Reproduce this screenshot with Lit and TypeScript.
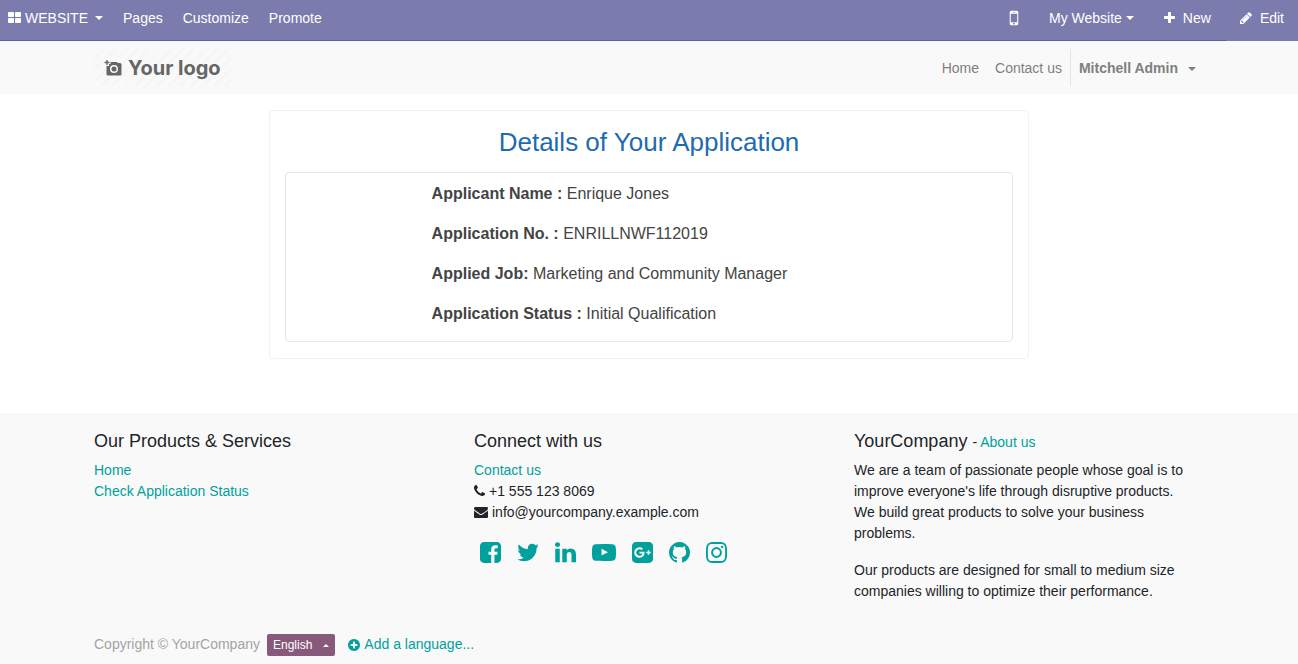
import { LitElement, html, css, svg } from "lit";
import { customElement } from "lit/decorators.js";

interface Glyph {
  x: number;
  w: number;
  d: string;
}

const glyphs: Record<string, Glyph> = {
  grid: { x: 64, w: 1664, d: "M832 1024v384q0 52-38 90t-90 38h-512q-52 0-90-38t-38-90v-384q0-52 38-90t90-38h512q52 0 90 38t38 90zm0-768v384q0 52-38 90t-90 38h-512q-52 0-90-38t-38-90v-384q0-52 38-90t90-38h512q52 0 90 38t38 90zm896 768v384q0 52-38 90t-90 38h-512q-52 0-90-38t-38-90v-384q0-52 38-90t90-38h512q52 0 90 38t38 90zm0-768v384q0 52-38 90t-90 38h-512q-52 0-90-38t-38-90v-384q0-52 38-90t90-38h512q52 0 90 38t38 90z" },
  mobile: { x: 512, w: 768, d: "M976 1408q0-33-23.5-56.5t-56.5-23.5-56.5 23.5-23.5 56.5 23.5 56.5 56.5 23.5 56.5-23.5 23.5-56.5zm208-160v-704q0-13-9.5-22.5t-22.5-9.5h-512q-13 0-22.5 9.5t-9.5 22.5v704q0 13 9.5 22.5t22.5 9.5h512q13 0 22.5-9.5t9.5-22.5zm-192-848q0-16-16-16h-160q-16 0-16 16t16 16h160q16 0 16-16zm288-16v1024q0 52-38 90t-90 38h-512q-52 0-90-38t-38-90v-1024q0-52 38-90t90-38h512q52 0 90 38t38 90z" },
  plus: { x: 192, w: 1408, d: "M1600 736v192q0 40-28 68t-68 28h-416v416q0 40-28 68t-68 28h-192q-40 0-68-28t-28-68v-416h-416q-40 0-68-28t-28-68v-192q0-40 28-68t68-28h416v-416q0-40 28-68t68-28h192q40 0 68 28t28 68v416h416q40 0 68 28t28 68z" },
  pencil: { x: 128, w: 1536, d: "M491 1536l91-91-235-235-91 91v107h128v128h107zm523-928q0-22-22-22-10 0-17 7l-542 542q-7 7-7 17 0 22 22 22 10 0 17-7l542-542q7-7 7-17zm-54-192l416 416-832 832h-416v-416zm683 96q0 53-37 90l-166 166-416-416 166-165q36-38 90-38 53 0 91 38l235 234q37 39 37 91z" },
  phone: { x: 192, w: 1408, d: "M1600 1240q0 27-10 70.5t-21 68.5q-21 50-122 106-94 51-186 51-27 0-53-3.5t-57.5-12.5-47-14.5-55.5-20.5-49-18q-98-35-175-83-127-79-264-216t-216-264q-48-77-83-175-3-9-18-49t-20.5-55.5-14.5-47-12.5-57.5-3.5-53q0-92 51-186 56-101 106-122 25-11 68.5-21t70.5-10q14 0 21 3 18 6 53 76 11 19 30 54t35 63.5 31 53.5q3 4 17.5 25t21.5 35.5 7 28.5q0 20-28.5 50t-62 55-62 53-28.5 46q0 9 5 22.5t8.5 20.5 14 24 11.5 19q76 137 174 235t235 174q2 1 19 11.5t24 14 20.5 8.5 22.5 5q18 0 46-28.5t53-62 55-62 50-28.5q14 0 28.5 7t35.5 21.5 25 17.5q25 15 53.5 31t63.5 35 54 30q70 35 76 53 3 7 3 21z" },
  envelope: { x: 0, w: 1792, d: "M1792 710v794q0 66-47 113t-113 47h-1472q-66 0-113-47t-47-113v-794q44 49 101 87 362 246 497 345 57 42 92.5 65.5t94.5 48 110 24.5h2q51 0 110-24.5t94.5-48 92.5-65.5q170-123 498-345 57-39 100-87zm0-294q0 79-49 151t-122 123q-376 261-468 325-10 7-42.5 31t-54 38.5-52 32.5-57.5 27-50 9h-2q-23 0-50-9t-57.5-27-52-32.5-54-38.5-42.5-31q-91-64-262-182.5t-205-142.5q-62-42-117-115.5t-55-136.5q0-78 41.5-130t118.5-52h1472q65 0 112.5 47t47.5 113z" },
  facebook: { x: 128, w: 1536, d: "M1376 128q119 0 203.5 84.5t84.5 203.5v960q0 119-84.5 203.5t-203.5 84.5h-188v-595h199l30-232h-229v-148q0-56 23.5-84t91.5-28l122-1v-207q-63-9-178-9-136 0-217.5 80t-81.5 226v171h-200v232h200v595h-532q-119 0-203.5-84.5t-84.5-203.5v-960q0-119 84.5-203.5t203.5-84.5h960z" },
  twitter: { x: 88, w: 1616, d: "M1684 408q-67 98-162 167 1 14 1 42 0 130-38 259.5t-115.5 248.5-184.5 210.5-258 146-323 54.5q-271 0-496-145 35 4 78 4 225 0 401-138-105-2-188-64.5t-114-159.5q33 5 61 5 43 0 85-11-112-23-185.5-111.5t-73.5-205.5v-4q68 38 146 41-66-44-105-115t-39-154q0-88 44-163 121 149 294.5 238.5t371.5 99.5q-8-38-8-74 0-134 94.5-228.5t228.5-94.5q140 0 236 102 109-21 205-78-37 115-142 178 93-10 186-50z" },
  linkedin: { x: 128, w: 1536, d: "M477 625v991h-330v-991h330zm21-306q1 73-50.5 122t-135.5 49h-2q-82 0-132-49t-50-122q0-74 51.5-122.5t134.5-48.5 133 48.5 51 122.5zm1166 729v568h-329v-530q0-105-40.5-164.5t-126.5-59.5q-63 0-105.5 34.5t-63.5 85.5q-11 30-11 81v553h-329q2-399 2-647t-1-296l-1-48h329v144h-2q20-32 41-56t56.5-52 87-43.5 114.5-15.5q171 0 275 113.5t104 332.5z" },
  youtube: { x: 0, w: 1792, d: "M711 1128l484-250-484-253v503zm185-862q168 0 324.5 4.5t229.5 9.5l73 4q1 0 17 1.5t23 3 23.5 4.5 28.5 8 28 13 31 19.5 29 26.5q6 6 15.5 18.5t29 58.5 26.5 101q8 64 12.5 136.5t5.5 113.5v176q1 145-18 290-7 55-25 99.5t-32 61.5l-14 17q-14 15-29 26.5t-31 19-28 12.5-28.5 8-24 4.5-23 3-16.5 1.5q-251 19-627 19-207-2-359.5-6.5t-200.5-7.5l-49-4-36-4q-36-5-54.5-10t-51-21-56.5-41q-6-6-15.5-18.5t-29-58.5-26.5-101q-8-64-12.5-136.5t-5.5-113.5v-176q-1-145 18-290 7-55 25-99.5t32-61.5l14-17q14-15 29-26.5t31-19.5 28-13 28.5-8 23.5-4.5 23-3 17-1.5q251-18 627-18z" },
  google: { x: 128, w: 1536, d: "M1045 905q0-26-6-64h-362v132h217q-3 24-16.5 50t-37.5 53-66.5 44.5-96.5 17.5q-99 0-169-71t-70-171 70-171 169-71q92 0 153 59l104-101q-108-100-257-100-160 0-272 112.5t-112 271.5 112 271.5 272 112.5q165 0 266.5-105t101.5-270zm345 46h109v-110h-109v-110h-110v110h-110v110h110v110h110v-110zm274-535v960q0 119-84.5 203.5t-203.5 84.5h-960q-119 0-203.5-84.5t-84.5-203.5v-960q0-119 84.5-203.5t203.5-84.5h960q119 0 203.5 84.5t84.5 203.5z" },
  github: { x: 128, w: 1536, d: "M896 128q209 0 385.5 103t279.5 279.5 103 385.5q0 251-146.5 451.5t-378.5 277.5q-27 5-40-7t-13-30q0-3 .5-76.5t.5-134.5q0-97-52-142 57-6 102.5-18t94-39 81-66.5 53-105 20.5-150.5q0-119-79-206 37-91-8-204-28-9-81 11t-92 44l-38 24q-93-26-192-26t-192 26q-16-11-42.5-27t-83.5-38.5-85-13.5q-45 113-8 204-79 87-79 206 0 85 20.5 150t52.5 105 80.5 67 94 39 102.5 18q-39 36-49 103-21 10-45 15t-57 5-65.5-21.5-55.5-62.5q-19-32-48.5-52t-49.5-24l-20-3q-21 0-29 4.5t-5 11.5 9 14 13 12l7 5q22 10 43.5 38t31.5 51l10 23q13 38 44 61.5t67 30 69.5 7 55.5-3.5l23-4q0 38 .5 88.5t.5 54.5q0 18-13 30t-40 7q-232-77-378.5-277.5t-146.5-451.5q0-209 103-385.5t279.5-279.5 385.5-103z" },
  instagram: { x: 128, w: 1536, d: "M1152 896q0-106-75-181t-181-75-181 75-75 181 75 181 181 75 181-75 75-181zm138 0q0 164-115 279t-279 115-279-115-115-279 115-279 279-115 279 115 115 279zm108-410q0 38-27 65t-65 27-65-27-27-65 27-65 65-27 65 27 27 65zm-502-220q-7 0-76.5-.5t-105.5 0-96.5 3-103 10-71.5 18.5q-50 20-88 58t-58 88q-11 29-18.5 71.5t-10 103-3 96.5 0 105.5.5 76.5-.5 76.5 0 105.5 3 96.5 10 103 18.5 71.5q20 50 58 88t88 58q29 11 71.5 18.5t103 10 96.5 3 105.5 0 76.5-.5 76.5.5 105.5 0 96.5-3 103-10 71.5-18.5q50-20 88-58t58-88q11-29 18.5-71.5t10-103 3-96.5 0-105.5-.5-76.5.5-76.5 0-105.5-3-96.5-10-103-18.5-71.5q-20-50-58-88t-88-58q-29-11-71.5-18.5t-103-10-96.5-3-105.5 0-76.5.5zm768 630q0 229-5 317-10 208-124 322t-322 124q-88 5-317 5t-317-5q-208-10-322-124t-124-322q-5-88-5-317t5-317q10-208 124-322t322-124q88-5 317-5t317 5q208 10 322 124t124 322q5 88 5 317z" },
  plusCircle: { x: 128, w: 1536, d: "M1344 960v-128q0-26-19-45t-45-19h-256v-256q0-26-19-45t-45-19h-128q-26 0-45 19t-19 45v256h-256q-26 0-45 19t-19 45v128q0 26 19 45t45 19h256v256q0 26 19 45t45 19h128q26 0 45-19t19-45v-256h256q26 0 45-19t19-45zm320-64q0 209-103 385.5t-279.5 279.5-385.5 103-385.5-103-279.5-279.5-103-385.5 103-385.5 279.5-279.5 385.5-103 385.5 103 279.5 279.5 103 385.5z" },
};

const icon = (name: string, width: number, height = 14) => {
  const g = glyphs[name];
  return html`<svg class="icon" width=${width} height=${height} viewBox="${g.x} 0 ${g.w} 1792" aria-hidden="true">
    ${svg`<path d=${g.d}></path>`}
  </svg>`;
};

const socials: [string, string, number][] = [
  ["facebook", "Facebook", 21],
  ["twitter", "Twitter", 22],
  ["linkedin", "LinkedIn", 21],
  ["youtube", "YouTube", 24],
  ["google", "Google Plus", 21],
  ["github", "GitHub", 21],
  ["instagram", "Instagram", 21],
];

const details: [string, string][] = [
  ["Applicant Name :", "Enrique Jones"],
  ["Application No. :", "ENRILLNWF112019"],
  ["Applied Job:", "Marketing and Community Manager"],
  ["Application Status :", "Initial Qualification"],
];

@customElement("app-root")
export class AppRoot extends LitElement {
  static styles = css`
    :host {
      display: flex;
      flex-direction: column;
      min-height: 100vh;
      font: 14px/21px "Liberation Sans", Arial, sans-serif;
      color: #212529;
      background: #fff;
    }
    * { box-sizing: border-box; }
    h1, h2, p, ul { margin: 0; padding: 0; font-weight: 400; }
    ul { list-style: none; }
    a { color: #00a09d; text-decoration: none; }
    button {
      font: inherit;
      color: inherit;
      background: none;
      border: 0;
      padding: 0;
      margin: 0;
      cursor: pointer;
    }
    .icon { fill: currentColor; flex: none; display: block; }
    .caret {
      width: 0;
      height: 0;
      border: 4px solid transparent;
      border-top-color: currentColor;
      border-bottom-width: 0;
    }
    .caret.up { border: 3px solid transparent; border-bottom-color: currentColor; border-top-width: 0; }
    .container { width: 100%; max-width: 1140px; margin: 0 auto; padding: 0 15px; }

    .editor { display: flex; background: #7c7bad; color: #fff; }
    .editor a, .editor button { display: flex; align-items: center; color: #fff; height: 36px; }
    .editor-main {
      flex: 1;
      display: flex;
      justify-content: space-between;
      padding-left: 8px;
      height: 41px;
      border-bottom: 1px solid #5f5e97;
    }
    .editor-pages { display: flex; gap: 20px; }
    .editor-tools { display: flex; gap: 30px; padding-right: 15px; }
    .brand { gap: 4px; }
    .brand .caret { margin-left: 3px; }
    .site { gap: 4px; }
    .tool { gap: 8px; }
    .edit { padding: 0 14px; }

    .header { background: #f9f9f9; padding: 8px 0; }
    .header .container { display: flex; justify-content: space-between; align-items: stretch; }
    .logo {
      display: flex;
      align-items: center;
      gap: 6px;
      padding: 0 10px;
      height: 37px;
      color: #666;
      font: 700 20px/24px Inter, sans-serif;
      background: repeating-linear-gradient(135deg, #f9f9f9 0 6px, #f5f5f5 6px 8px);
    }
    .menu { display: flex; align-items: stretch; }
    .menu a, .menu button { display: flex; align-items: center; padding: 2px 8px 0; color: #7f7f7f; }
    .menu button { gap: 10px; font-weight: 700; border-left: 1px solid #e5e5e5; }

    .main { padding: 16px 0 54px; }
    .card {
      width: 100%;
      max-width: 760px;
      margin: 0 auto;
      padding: 16px 15px;
      border: 1px solid #f2f2f2;
      border-radius: 4px;
    }
    .title { font-size: 26px; line-height: 30px; color: #1f6bb0; text-align: center; margin-bottom: 15px; }
    .details {
      border: 1px solid #e6e6e6;
      border-radius: 4px;
      padding: 9px 16px 15px 20%;
      font-size: 16px;
      line-height: 24px;
      color: #444;
    }
    .details p + p { margin-top: 16px; }

    .footer { flex: 1; background: #f9f9f9; padding: 17px 0 8px; }
    .columns { display: grid; grid-template-columns: repeat(3, 1fr); gap: 30px; }
    .heading { font-size: 18px; line-height: 22px; margin-bottom: 8px; }
    .heading small { font-size: 14px; line-height: 14px; }
    .contact { display: flex; align-items: center; gap: 4px; }
    .contact .icon { margin-bottom: 2px; }
    .social { display: flex; gap: 16px; padding: 17px 6px 0; }
    .social a { display: block; }
    .about { padding-right: 10px; }
    .about p + p { margin-top: 16px; }
    .bottom { display: flex; align-items: flex-start; margin-top: 32px; }
    .copyright { color: #a4a4a4; }
    .bottom .lang {
      display: flex;
      align-items: center;
      gap: 11px;
      margin: 0 13px 0 7px;
      padding: 2px 6px;
      font-size: 12px;
      line-height: 18px;
      color: #fff;
      background: #875a7b;
      border-radius: 2px;
    }
    .add { display: flex; align-items: center; gap: 4px; }
  `;

  render() {
    return html`
      <nav class="editor" aria-label="Website editor">
        <div class="editor-main">
          <div class="editor-pages">
            <button class="brand">${icon("grid", 13)}<span>WEBSITE</span> <span class="caret"></span></button>
            <a href="#pages">Pages</a>
            <a href="#customize">Customize</a>
            <a href="#promote">Promote</a>
          </div>
          <div class="editor-tools">
            <button aria-label="Mobile preview">${icon("mobile", 10, 20)}</button>
            <button class="site">My Website<span class="caret"></span></button>
            <button class="tool">${icon("plus", 11)}New</button>
          </div>
        </div>
        <button class="tool edit">${icon("pencil", 12)}Edit</button>
      </nav>

      <header class="header">
        <div class="container">
          <a class="logo" href="#home">
            <svg width="18" height="18" viewBox="0 0 18 18" aria-hidden="true">
              <path fill="#666" fill-rule="evenodd" d="M6.500 3H13l1 1h2A1.500 1.500 0 0 1 17.500 5.500V15A1.500 1.500 0 0 1 16 16.500H4A1.500 1.500 0 0 1 2.500 15V7H5V5H6.500zM10 6a4 4 0 1 0 0 8a4 4 0 0 0 0-8zM10 7.500a2.500 2.500 0 1 1 0 5a2.500 2.500 0 0 1 0-5z"></path>
              <path stroke="#666" stroke-width="1.400" d="M3 1v5M.500 3.500h5"></path>
            </svg>
            <span>Your logo</span>
          </a>
          <nav class="menu" aria-label="Main">
            <a href="#home">Home</a>
            <a href="#contact">Contact us</a>
            <button>Mitchell Admin <span class="caret"></span></button>
          </nav>
        </div>
      </header>

      <main class="main">
        <section class="card">
          <h1 class="title">Details of Your Application</h1>
          <div class="details">
            ${details.map(([label, value]) => html`<p><strong>${label}</strong> ${value}</p>`)}
          </div>
        </section>
      </main>

      <footer class="footer">
        <div class="container">
          <div class="columns">
            <div>
              <h2 class="heading">Our Products &amp; Services</h2>
              <ul>
                <li><a href="#home">Home</a></li>
                <li><a href="#status">Check Application Status</a></li>
              </ul>
            </div>
            <div>
              <h2 class="heading">Connect with us</h2>
              <ul>
                <li><a href="#contact">Contact us</a></li>
                <li class="contact">${icon("phone", 11)}<span>+1 555 123 8069</span></li>
                <li class="contact">${icon("envelope", 14)}<span>info@yourcompany.example.com</span></li>
              </ul>
              <div class="social">
                ${socials.map(([name, label, width]) => html`<a href="#${name}" aria-label=${label}>${icon(name, width, 25)}</a>`)}
              </div>
            </div>
            <div class="about">
              <h2 class="heading">YourCompany <small>- <a href="#about">About us</a></small></h2>
              <p>We are a team of passionate people whose goal is to improve everyone's life through disruptive products. We build great products to solve your business problems.</p>
              <p>Our products are designed for small to medium size companies willing to optimize their performance.</p>
            </div>
          </div>
          <div class="bottom">
            <span class="copyright">Copyright © YourCompany</span>
            <button class="lang">English <span class="caret up"></span></button>
            <a class="add" href="#language">${icon("plusCircle", 12)}<span>Add a language...</span></a>
          </div>
        </div>
      </footer>
    `;
  }
}
